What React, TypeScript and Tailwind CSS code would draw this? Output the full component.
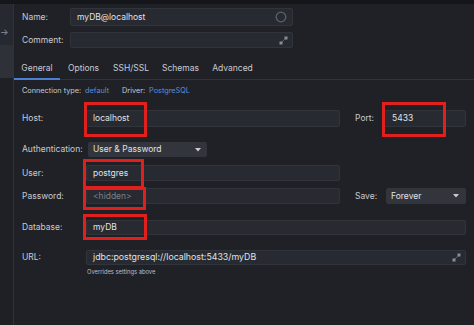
import React from "react";

function ExpandIcon() {
  return (
    <svg width="9" height="9" viewBox="0 0 9 9" className="shrink-0">
      <line x1="2" y1="7" x2="7" y2="2" stroke="#6b6e74" strokeWidth="0.8" />
      <rect x="0.5" y="5.5" width="3" height="3" fill="#8a8d93" />
      <rect x="5.5" y="0.5" width="3" height="3" fill="#8a8d93" />
    </svg>
  );
}

function Caret() {
  return (
    <svg width="6" height="4" viewBox="0 0 6 4" className="shrink-0">
      <path d="M0 0 L6 0 L3 3.5 Z" fill="#c9cbcf" />
    </svg>
  );
}

function Input({
  value,
  className,
  muted,
  icon,
}: {
  value?: string;
  className: string;
  muted?: boolean;
  icon?: React.ReactNode;
}) {
  return (
    <div
      className={
        "flex items-center justify-between bg-[#272a30] border border-[#31343a] rounded-[2px] pl-[6px] pr-[4px] " +
        className
      }
    >
      <span className={muted ? "text-[#7d8086]" : "text-[#e0e2e6]"}>{value}</span>
      {icon}
    </div>
  );
}

function Select({ value, className }: { value: string; className: string }) {
  return (
    <div
      className={
        "flex items-center justify-between bg-[#32353b] rounded-[2px] pl-[5px] pr-[6px] text-[#e0e2e6] " +
        className
      }
    >
      <span>{value}</span>
      <Caret />
    </div>
  );
}

function RedBox({ className }: { className: string }) {
  return <div className={"absolute border-[3px] border-[#e11f1c] " + className} />;
}

export default function App() {
  const tabs = [
    { t: "General", w: "w-[46px]", active: true },
    { t: "Options", w: "w-[47px]" },
    { t: "SSH/SSL", w: "w-[48px]" },
    { t: "Schemas", w: "w-[51px]" },
    { t: "Advanced", w: "w-[53px]" },
  ];
  return (
    <div className="relative w-[474px] h-[325px] overflow-hidden bg-[#1f2127] font-['Inter','Noto_Sans',sans-serif] text-[8.5px] text-[#c9cbcf] leading-none flex flex-col">
      <div className="h-[4px] bg-[#15161a] shrink-0" />
      <div className="flex flex-1">
        {/* sidebar */}
        <div className="w-[14px] shrink-0 border-r border-[#2f3238] flex flex-col">
          <div className="h-[41px] bg-[#262930] flex items-start pt-[23px]">
            <span className="text-[#8e9196] text-[9px]">→</span>
          </div>
          <div className="h-[33px] bg-[#2e3138]" />
          <div className="flex-1 bg-[#1e2025]" />
        </div>

        {/* main */}
        <div className="flex-1 flex flex-col">
          {/* Name */}
          <div className="mt-[4px] flex items-center h-[18px] pl-[8px]">
            <span className="w-[48px]">Name:</span>
            <Input
              value="myDB@localhost"
              className="w-[223px] h-[18px]"
              icon={
                <svg width="12" height="12" viewBox="0 0 12 12" className="mr-[1px]">
                  <circle cx="6" cy="6" r="4.8" fill="none" stroke="#5f6268" strokeWidth="1.3" />
                </svg>
              }
            />
          </div>
          {/* Comment */}
          <div className="mt-[6px] flex items-center h-[16px] pl-[8px]">
            <span className="w-[48px]">Comment:</span>
            <Input className="w-[223px] h-[16px]" icon={<ExpandIcon />} />
          </div>

          {/* Tabs */}
          <div className="mt-[10px] h-[22px] flex border-b border-[#30333a]">
            {tabs.map((tab) => (
              <div
                key={tab.t}
                className={"relative flex items-center justify-center h-full " + tab.w}
              >
                {tab.t}
                {tab.active && (
                  <div className="absolute left-0 right-0 bottom-[-1px] h-[2px] bg-[#4a7fd1]" />
                )}
              </div>
            ))}
          </div>

          {/* connection line */}
          <div className="mt-[6px] h-[10px] flex items-center pl-[8px] text-[7.3px]">
            <span>Connection type:</span>
            <span className="ml-[4px] text-[#5c8fd8]">default</span>
            <span className="ml-[13px]">Driver:</span>
            <span className="ml-[4px] text-[#5c8fd8]">PostgreSQL</span>
          </div>

          {/* Host / Port */}
          <div className="mt-[14px] h-[17px] flex items-center pl-[8px]">
            <span className="w-[64px]">Host:</span>
            <Input value="localhost" className="w-[254px] h-[17px]" />
            <span className="ml-[15px] w-[28px]">Port:</span>
            <Input value="5433" className="w-[83px] h-[17px] pl-[8px]" />
          </div>

          {/* Authentication */}
          <div className="mt-[14px] h-[17px] flex items-center pl-[8px]">
            <span className="w-[66px]">Authentication:</span>
            <Select value="User & Password" className="w-[119px] h-[15px]" />
          </div>

          {/* User */}
          <div className="mt-[7px] h-[16px] flex items-center pl-[8px]">
            <span className="w-[64px]">User:</span>
            <Input value="postgres" className="w-[254px] h-[16px]" />
          </div>

          {/* Password / Save */}
          <div className="mt-[7px] h-[16px] flex items-center pl-[8px]">
            <span className="w-[64px]">Password:</span>
            <Input value="<hidden>" muted className="w-[254px] h-[16px]" />
            <span className="ml-[15px] w-[31px]">Save:</span>
            <Select value="Forever" className="w-[80px] h-[16px] pr-[7px]" />
          </div>

          {/* Database */}
          <div className="mt-[16px] h-[15px] flex items-center pl-[8px]">
            <span className="w-[64px]">Database:</span>
            <Input value="myDB" className="w-[380px] h-[15px]" />
          </div>

          {/* URL */}
          <div className="mt-[15px] h-[15px] flex items-center pl-[8px]">
            <span className="w-[64px]">URL:</span>
            <Input
              value="jdbc:postgresql://localhost:5433/myDB"
              className="w-[380px] h-[15px] text-[8.8px]"
              icon={<ExpandIcon />}
            />
          </div>
          <div className="mt-[4px] pl-[73px] text-[5.8px] text-[#bcbec2]">Overrides settings above</div>
        </div>
      </div>

      {/* annotation boxes */}
      <RedBox className="left-[84px] top-[102px] w-[63px] h-[35px]" />
      <RedBox className="left-[382px] top-[102px] w-[64px] h-[35px]" />
      <RedBox className="left-[83px] top-[159px] w-[61px] h-[30px]" />
      <RedBox className="left-[83px] top-[187px] w-[63px] h-[23px]" />
      <RedBox className="left-[83px] top-[214px] w-[64px] h-[26px]" />
    </div>
  );
}
